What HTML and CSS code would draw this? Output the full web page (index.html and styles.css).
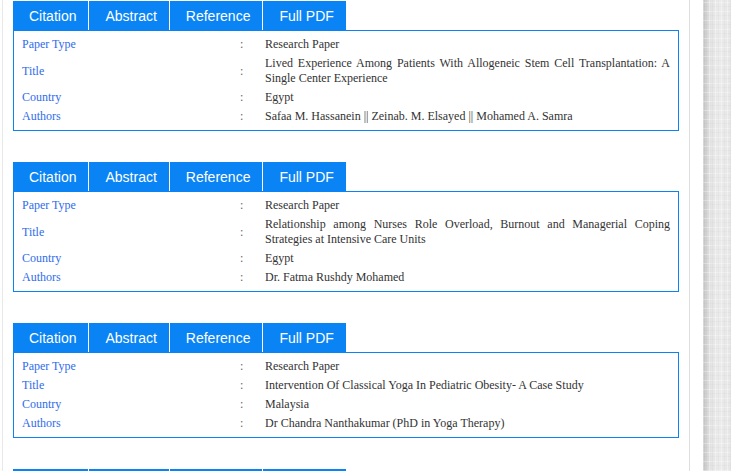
FILE: index.html
```html
<!DOCTYPE html>
<html lang="en">
<head>
<meta charset="utf-8">
<title>Articles</title>
<link rel="stylesheet" href="styles.css">
</head>
<body>
<div class="page">
  <main class="panel">
    <section class="article">
      <nav class="tabs">
        <span class="tab">Citation</span><span class="tab">Abstract</span><span class="tab">Reference</span><span class="tab">Full PDF</span>
      </nav>
      <div class="box">
        <div class="row"><span class="label">Paper Type</span><span class="colon">:</span><span class="value">Research Paper</span></div>
        <div class="row"><span class="label">Title</span><span class="colon">:</span><span class="value">Lived Experience Among Patients With Allogeneic Stem Cell Transplantation: A Single Center Experience</span></div>
        <div class="row"><span class="label">Country</span><span class="colon">:</span><span class="value">Egypt</span></div>
        <div class="row"><span class="label">Authors</span><span class="colon">:</span><span class="value">Safaa M. Hassanein || Zeinab. M. Elsayed || Mohamed A. Samra</span></div>
      </div>
    </section>
    <section class="article">
      <nav class="tabs">
        <span class="tab">Citation</span><span class="tab">Abstract</span><span class="tab">Reference</span><span class="tab">Full PDF</span>
      </nav>
      <div class="box">
        <div class="row"><span class="label">Paper Type</span><span class="colon">:</span><span class="value">Research Paper</span></div>
        <div class="row"><span class="label">Title</span><span class="colon">:</span><span class="value">Relationship among Nurses Role Overload, Burnout and Managerial Coping Strategies at Intensive Care Units</span></div>
        <div class="row"><span class="label">Country</span><span class="colon">:</span><span class="value">Egypt</span></div>
        <div class="row"><span class="label">Authors</span><span class="colon">:</span><span class="value">Dr. Fatma Rushdy Mohamed</span></div>
      </div>
    </section>
    <section class="article">
      <nav class="tabs">
        <span class="tab">Citation</span><span class="tab">Abstract</span><span class="tab">Reference</span><span class="tab">Full PDF</span>
      </nav>
      <div class="box">
        <div class="row"><span class="label">Paper Type</span><span class="colon">:</span><span class="value">Research Paper</span></div>
        <div class="row"><span class="label">Title</span><span class="colon">:</span><span class="value">Intervention Of Classical Yoga In Pediatric Obesity- A Case Study</span></div>
        <div class="row"><span class="label">Country</span><span class="colon">:</span><span class="value">Malaysia</span></div>
        <div class="row"><span class="label">Authors</span><span class="colon">:</span><span class="value">Dr Chandra Nanthakumar (PhD in Yoga Therapy)</span></div>
      </div>
    </section>
    <section class="article">
      <nav class="tabs">
        <span class="tab">Citation</span><span class="tab">Abstract</span><span class="tab">Reference</span><span class="tab">Full PDF</span>
      </nav>
      <div class="box">
        <div class="row"><span class="label">Paper Type</span><span class="colon">:</span><span class="value">Research Paper</span></div>
      </div>
    </section>
  </main>
  <div class="gutter"></div>
  <aside class="texture"></aside>
</div>
</body>
</html>
```
FILE: styles.css
```css
html, body {
  margin: 0;
  padding: 0;
  background: #ffffff;
  overflow: hidden;
}

.page {
  display: flex;
  height: 471px;
}

.panel {
  margin-left: 2px;
  width: 666px;
  padding: 1px 10px 0 10px;
  border-left: 1px solid #e8e8e8;
  border-right: 1px solid #dedede;
  flex: none;
}

.gutter {
  width: 13px;
  flex: none;
}

.texture {
  flex: 1;
  background-image:
    repeating-linear-gradient(90deg, rgba(255,255,255,0.35) 0 1px, transparent 1px 3px, rgba(0,0,0,0.025) 3px 4px, transparent 4px 6px),
    repeating-linear-gradient(0deg, rgba(255,255,255,0.3) 0 1px, transparent 1px 5px, rgba(0,0,0,0.02) 5px 6px, transparent 6px 9px),
    linear-gradient(90deg, #bcbcbc 0, #d3d3d3 3px, #e4e4e4 8px, #ebebeb 16px, #e6e6e6 100%);
}

.article {
  margin-bottom: 31px;
}

.tabs {
  display: flex;
  gap: 1px;
}

.tab {
  background: #0a84f4;
  color: #ffffff;
  font-family: "Liberation Sans", Arial, sans-serif;
  font-size: 14px;
  line-height: 28px;
  height: 28px;
  padding: 1px 12px 0 16px;
}

.box {
  border: 1px solid #0a84f4;
  padding: 4px 8px;
  font-family: "Liberation Serif", "Times New Roman", serif;
  font-size: 12px;
  line-height: 15px;
}

.row {
  display: grid;
  grid-template-columns: 216px 27px 1fr;
  align-items: center;
  padding: 2px 0;
}

.label {
  color: #2f6cec;
}

.colon {
  color: #666666;
  padding-left: 2px;
}

.value {
  color: #333333;
  text-align: justify;
}
```
